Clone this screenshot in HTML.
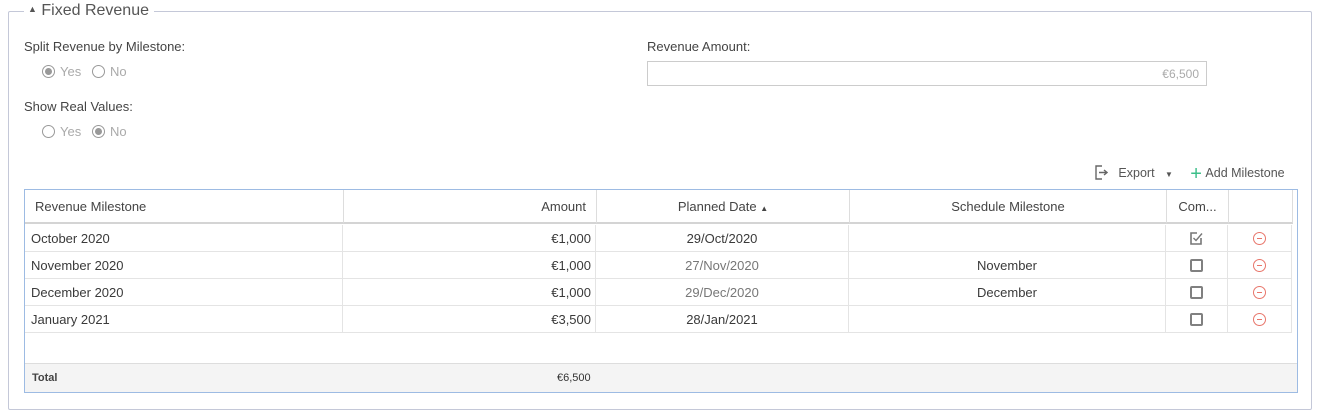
<!DOCTYPE html>
<html><head><style>
*{box-sizing:border-box;margin:0;padding:0}
body{width:1321px;height:416px;background:#fff;font-family:"Liberation Sans",sans-serif;font-size:13px;color:#333;position:relative;overflow:hidden}
.a{position:absolute;white-space:nowrap}
.fs{left:8px;top:11px;width:1304px;height:399px;border:1px solid #c4c8d8;border-radius:2px}
.lg{left:24px;top:2px;background:#fff;padding:0 5px 0 4px;font-size:16px;color:#555}
.lbl{color:#444}
.rad{color:#aaa}
.rc{display:inline-block;width:13px;height:13px;border:1px solid #999;border-radius:50%;vertical-align:-2px;margin-right:5px;position:relative}
.rc.on::after{content:"";position:absolute;left:2px;top:2px;width:7px;height:7px;border-radius:50%;background:#999}
.inp{left:647px;top:61px;width:560px;height:25px;border:1px solid #ccc;color:#aaa;text-align:right;padding:5px 7px;font-size:12px}
.tb{left:24px;top:189px;width:1274px;height:204px;border:1px solid #9dbbe3}
.hd{left:0;top:0;height:34px;border-bottom:2px solid #d4d4d4;border-right:1px solid #ddd;line-height:34px;padding:0 10px;color:#444}
.c{height:27px;line-height:27px;border-bottom:1px solid #e4e4e4;border-right:1px solid #e4e4e4;padding:0 6px;color:#3a3a3a}
.ft{left:0;top:173px;width:1272px;height:29px;background:#f4f4f4;border-top:1px solid #ddd;font-size:11px;line-height:28px}
.cb{display:inline-block;width:13px;height:13px;border:2px solid #808080;border-radius:2px;vertical-align:-2px}
.mi{display:inline-block;width:13px;height:13px;border:1.3px solid #e8766b;border-radius:50%;position:relative;vertical-align:-2px}
.mi::after{content:"";position:absolute;left:2.5px;top:4.7px;width:5.5px;height:1.3px;background:#e8766b}
</style></head><body>
<div class="a fs"></div>
<div class="a lg"><span style="font-size:9px;vertical-align:3px">▲</span> Fixed Revenue</div>
<div class="a lbl" style="left:24px;top:39px">Split Revenue by Milestone:</div>
<div class="a rad" style="left:42px;top:64px"><span class="rc on"></span>Yes&nbsp;&nbsp;&nbsp;<span class="rc"></span>No</div>
<div class="a lbl" style="left:24px;top:99px">Show Real Values:</div>
<div class="a rad" style="left:42px;top:124px"><span class="rc"></span>Yes&nbsp;&nbsp;&nbsp;<span class="rc on"></span>No</div>
<div class="a lbl" style="left:647px;top:39px">Revenue Amount:</div>
<div class="a inp">€6,500</div>
<div class="a" style="left:1094px;top:163px;color:#555;font-size:12.5px">
<svg width="14" height="15" viewBox="0 0 14 15" style="vertical-align:-3px"><path d="M8 1H2v13h6M5 7.5h8M10 5l3 2.5-3 2.5" fill="none" stroke="#666" stroke-width="1.4"/></svg>
&nbsp;&nbsp;Export &nbsp;&nbsp;<span style="font-size:8px">▼</span>&nbsp;&nbsp;&nbsp;&nbsp;
<span style="color:#3cbf8a;font-size:20px;vertical-align:-3px">+</span>&nbsp;Add Milestone</div>
<div class="a tb">
<div class="a hd" style="left:0;width:319px">Revenue Milestone</div>
<div class="a hd" style="left:319px;width:253px;text-align:right">Amount</div>
<div class="a hd" style="left:572px;width:253px;text-align:center">Planned Date <span style="font-size:8px">▲</span></div>
<div class="a hd" style="left:825px;width:317px;text-align:center">Schedule Milestone</div>
<div class="a hd" style="left:1142px;width:62px;text-align:center;padding:0">Com...</div>
<div class="a hd" style="left:1204px;width:64px"></div>
<div class="a" style="left:0;top:35px;width:1268px">
<div style="display:flex"><div class="c" style="width:318px">October 2020</div><div class="c" style="width:253px;text-align:right;padding-right:4px">€1,000</div><div class="c" style="width:253px;text-align:center">29/Oct/2020</div><div class="c" style="width:317px"></div><div class="c" style="width:62px;text-align:center"><svg width="13" height="13" viewBox="0 0 13 13" style="vertical-align:-2px"><path d="M11 6v6H1V1h6" fill="none" stroke="#777" stroke-width="1.6"/><path d="M3.5 6l2.5 2.5L12 1.5" fill="none" stroke="#777" stroke-width="1.4"/></svg></div><div class="c" style="width:64px;text-align:center"><span class="mi"></span></div></div>
<div style="display:flex"><div class="c" style="width:318px">November 2020</div><div class="c" style="width:253px;text-align:right;padding-right:4px">€1,000</div><div class="c" style="width:253px;text-align:center;color:#777">27/Nov/2020</div><div class="c" style="width:317px;text-align:center">November</div><div class="c" style="width:62px;text-align:center"><span class="cb"></span></div><div class="c" style="width:64px;text-align:center"><span class="mi"></span></div></div>
<div style="display:flex"><div class="c" style="width:318px">December 2020</div><div class="c" style="width:253px;text-align:right;padding-right:4px">€1,000</div><div class="c" style="width:253px;text-align:center;color:#777">29/Dec/2020</div><div class="c" style="width:317px;text-align:center">December</div><div class="c" style="width:62px;text-align:center"><span class="cb"></span></div><div class="c" style="width:64px;text-align:center"><span class="mi"></span></div></div>
<div style="display:flex"><div class="c" style="width:318px">January 2021</div><div class="c" style="width:253px;text-align:right;padding-right:4px">€3,500</div><div class="c" style="width:253px;text-align:center">28/Jan/2021</div><div class="c" style="width:317px"></div><div class="c" style="width:62px;text-align:center"><span class="cb"></span></div><div class="c" style="width:64px;text-align:center"><span class="mi"></span></div></div>
</div>
<div class="a ft"><span class="a" style="left:7px;font-weight:bold;color:#444">Total</span><span class="a" style="left:532px">€6,500</span></div>
</div>
</body></html>
